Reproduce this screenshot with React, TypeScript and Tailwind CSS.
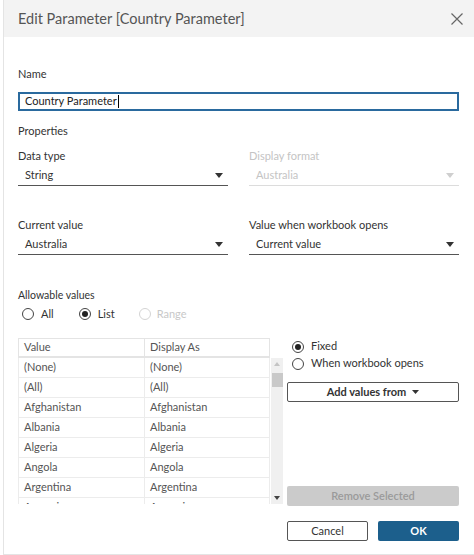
const font = { fontFamily: "Lato, 'Noto Sans', sans-serif" };

const Arrow = ({ disabled }: { disabled?: boolean }) => (
  <svg width="8" height="5" viewBox="0 0 8 5">
    <path d="M0 0h8L4 5z" fill={disabled ? "#cfcfcf" : "#333"} />
  </svg>
);

const Radio = ({ checked, disabled }: { checked?: boolean; disabled?: boolean }) => (
  <span
    className={`flex h-[12px] w-[12px] items-center justify-center rounded-full border ${
      disabled ? "border-[#d4d4d4]" : "border-[#444]"
    }`}
  >
    {checked && <span className="h-[6px] w-[6px] rounded-full bg-[#222]" />}
  </span>
);

const Select = ({ label, value, disabled }: { label: string; value: string; disabled?: boolean }) => (
  <div>
    <div className={`h-[16px] text-[11px] leading-[16px] ${disabled ? "text-[#c4c4c4]" : "text-[#333]"}`}>{label}</div>
    <div
      className={`mt-px flex h-[21px] items-center justify-between border-b pl-[7px] pr-[5px] text-[11px] ${
        disabled ? "border-[#dcdcdc] text-[#c4c4c4]" : "border-[#555] text-[#333]"
      }`}
    >
      <span>{value}</span>
      <Arrow disabled={disabled} />
    </div>
  </div>
);

const rows = ["(None)", "(All)", "Afghanistan", "Albania", "Algeria", "Angola", "Argentina", "Armenia"];

export default function App() {
  return (
    <div className="h-[555px] w-[474px] bg-white pl-[3px]" style={font}>
      <div className="flex h-full flex-col border-b border-l border-[#e4e4e4]">
        <div className="flex h-[37px] items-center justify-between bg-[#f3f3f3] pl-[14px] pr-[8px]">
          <span className="text-[14.5px] text-[#555]">Edit Parameter [Country Parameter]</span>
          <svg width="14" height="14" viewBox="0 0 14 14" className="mr-[2px]">
            <path d="M1.5 1.5l11 11M12.5 1.5l-11 11" stroke="#666" strokeWidth="1.2" />
          </svg>
        </div>

        <div className="flex flex-col pl-[14px] pr-[15px]">
          <div className="mt-[29px] h-[16px] text-[11px] leading-[16px] text-[#333]">Name</div>
          <div className="mt-[10px] flex h-[19px] items-center border-2 border-[#2a6a9e] pl-[5px] text-[11px] text-[#222]">
            Country Parameter
            <span className="ml-px h-[13px] w-px bg-black" />
          </div>

          <div className="mt-[12px] h-[16px] text-[11px] leading-[16px] text-[#333]">Properties</div>

          <div className="mt-[9px] grid grid-cols-2 gap-x-[21px]">
            <Select label="Data type" value="String" />
            <Select label="Display format" value="Australia" disabled />
          </div>

          <div className="mt-[31px] grid grid-cols-2 gap-x-[21px]">
            <Select label="Current value" value="Australia" />
            <Select label="Value when workbook opens" value="Current value" />
          </div>

          <div className="mt-[32px] h-[16px] text-[10.5px] leading-[16px] text-[#333]">Allowable values</div>
          <div className="mt-[3px] flex h-[16px] items-center pl-[4px] text-[11px] text-[#333]">
            <div className="flex items-center gap-[7px]">
              <Radio />
              <span>All</span>
            </div>
            <div className="ml-[25px] flex items-center gap-[7px]">
              <Radio checked />
              <span>List</span>
            </div>
            <div className="ml-[24px] flex items-center gap-[6px] text-[#c8c8c8]">
              <Radio disabled />
              <span>Range</span>
            </div>
          </div>

          <div className="mt-[16px] flex gap-[4px]">
            <div className="flex h-[166px] w-[265px] flex-col overflow-hidden">
              <div className="flex h-[20px] w-[252px] shrink-0 border border-b-2 border-[#e4e4e4] text-[11px] text-[#555]">
                <div className="flex w-[126px] items-center border-r border-[#e4e4e4] pl-[5px]">Value</div>
                <div className="flex flex-1 items-center pl-[5px]">Display As</div>
              </div>
              <div className="flex min-h-0 flex-1">
                <div className="w-[252px] overflow-hidden">
                  {rows.map((r) => (
                    <div key={r} className="flex h-[20px] border-x border-b border-[#ececec] text-[11px] text-[#555]">
                      <div className="flex w-[126px] items-center border-r border-[#ececec] pl-[5px]">{r}</div>
                      <div className="flex flex-1 items-center pl-[5px]">{r}</div>
                    </div>
                  ))}
                </div>
                <div className="ml-px flex w-[12px] flex-col items-center bg-[#f0f0f0]">
                  <svg width="6" height="4" viewBox="0 0 6 4" className="mt-[4px]">
                    <path d="M0 4h6L3 0z" fill="#c4c4c4" />
                  </svg>
                  <div className="mt-[7px] h-[14px] w-[11px] bg-[#c9c9c9]" />
                  <div className="flex-1" />
                  <svg width="6" height="4" viewBox="0 0 6 4" className="mb-[4px]">
                    <path d="M0 0h6L3 4z" fill="#444" />
                  </svg>
                </div>
              </div>
            </div>

            <div className="flex flex-1 flex-col">
              <div className="flex h-[17px] items-center gap-[7px] pl-[5px] text-[11px] text-[#333]">
                <Radio checked />
                <span>Fixed</span>
              </div>
              <div className="flex h-[17px] items-center gap-[7px] pl-[5px] text-[11px] text-[#333]">
                <Radio />
                <span>When workbook opens</span>
              </div>
              <div className="mt-[10px] flex h-[20px] items-center justify-center gap-[6px] rounded-[2px] border border-[#555] text-[11px] font-bold text-[#333]">
                Add values from
                <svg width="7" height="4" viewBox="0 0 7 4">
                  <path d="M0 0h7L3.5 4z" fill="#333" />
                </svg>
              </div>
              <div className="mt-[84px] flex h-[20px] items-center justify-center rounded-[2px] bg-[#cbcbcb] text-[11px] font-semibold text-[#9a9a9a]">
                Remove Selected
              </div>
            </div>
          </div>

          <div className="mt-[15px] flex justify-end gap-[10px]">
            <div className="flex h-[20px] w-[81px] items-center justify-center rounded-[2px] border border-[#555] text-[11px] text-[#333]">
              Cancel
            </div>
            <div className="flex h-[20px] w-[81px] items-center justify-center rounded-[2px] bg-[#1c5f8c] text-[11px] font-bold text-white">
              OK
            </div>
          </div>
        </div>
      </div>
    </div>
  );
}
